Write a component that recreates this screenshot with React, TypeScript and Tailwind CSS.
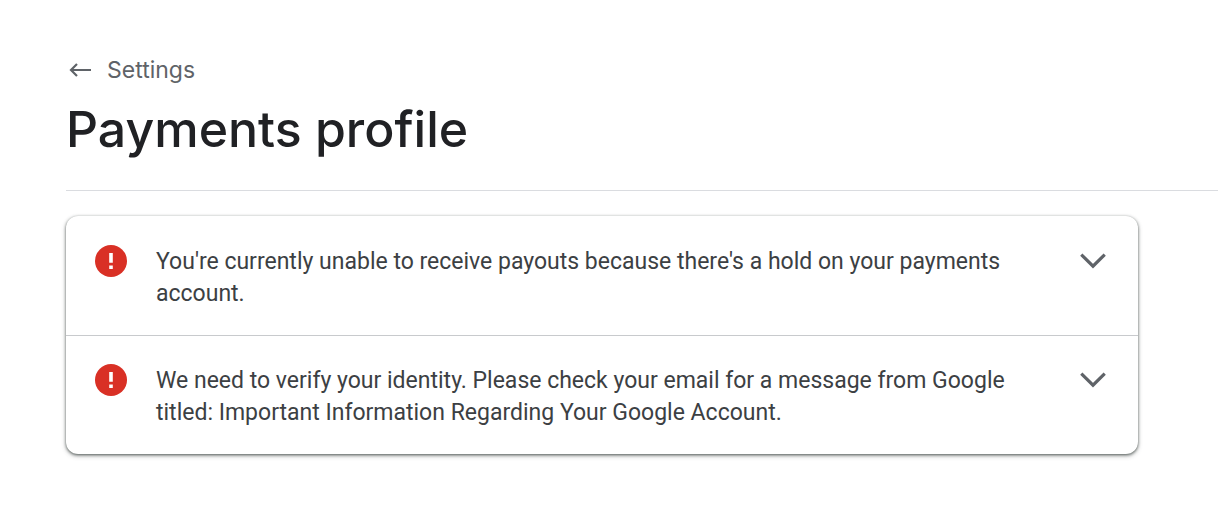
const notices = [
  "You're currently unable to receive payouts because there's a hold on your payments account.",
  "We need to verify your identity. Please check your email for a message from Google titled: Important Information Regarding Your Google Account.",
];

function BackArrow() {
  return (
    <svg width="22" height="14" viewBox="0 0 22 14" fill="none" stroke="currentColor" strokeWidth="2.2" aria-hidden="true">
      <path d="M22 7H2M8 1 2 7l6 6" />
    </svg>
  );
}

function ErrorIcon() {
  return (
    <svg className="shrink-0" width="32" height="32" viewBox="0 0 32 32" aria-hidden="true">
      <circle cx="16" cy="16" r="16" fill="#d93025" />
      <path d="M14.2 8h3.6v9.8h-3.6zM14.2 20.6h3.6v3.4h-3.6z" fill="#fff" />
    </svg>
  );
}

function Chevron() {
  return (
    <svg className="shrink-0" width="26" height="16" viewBox="0 0 26 16" fill="none" stroke="#5f6368" strokeWidth="3.2" aria-hidden="true">
      <path d="M1.3 1.6 13 13.2 24.7 1.6" />
    </svg>
  );
}

function Notice({ text }: { text: string }) {
  return (
    <li className="border-t border-[#c8cacd] first:border-t-0">
      <button type="button" className="flex w-full items-start px-7 pt-7 pb-[25px] text-left">
        <span className="ml-px flex">
          <ErrorIcon />
        </span>
        <span className="mr-16 ml-7 flex-1 pt-px pl-px font-['Roboto',sans-serif] text-[23px] leading-8 text-[#3c4043]">{text}</span>
        <span className="mr-1 flex h-8 items-center">
          <Chevron />
        </span>
      </button>
    </li>
  );
}

export default function App() {
  return (
    <main className="bg-white pt-14 pl-[66px] text-[#202124]">
      <header className="border-b border-[#dadce0] pb-7">
        <a href="#settings" className="flex w-fit items-center gap-4 pl-[3px] font-['Inter',sans-serif] text-[23px] leading-7 text-[#5f6368]">
          <BackArrow />
          Settings
        </a>
        <h1 className="mt-3 text-[50px] leading-[66px] font-medium font-['Inter',sans-serif]">Payments profile</h1>
      </header>
      <ul className="mt-[25px] mr-20 mb-10 rounded-xl pt-px shadow-[0_1px_3px_rgba(50,60,55,0.75),0_2px_5px_rgba(60,64,67,0.3)]">
        {notices.map((text) => (
          <Notice key={text} text={text} />
        ))}
      </ul>
    </main>
  );
}
